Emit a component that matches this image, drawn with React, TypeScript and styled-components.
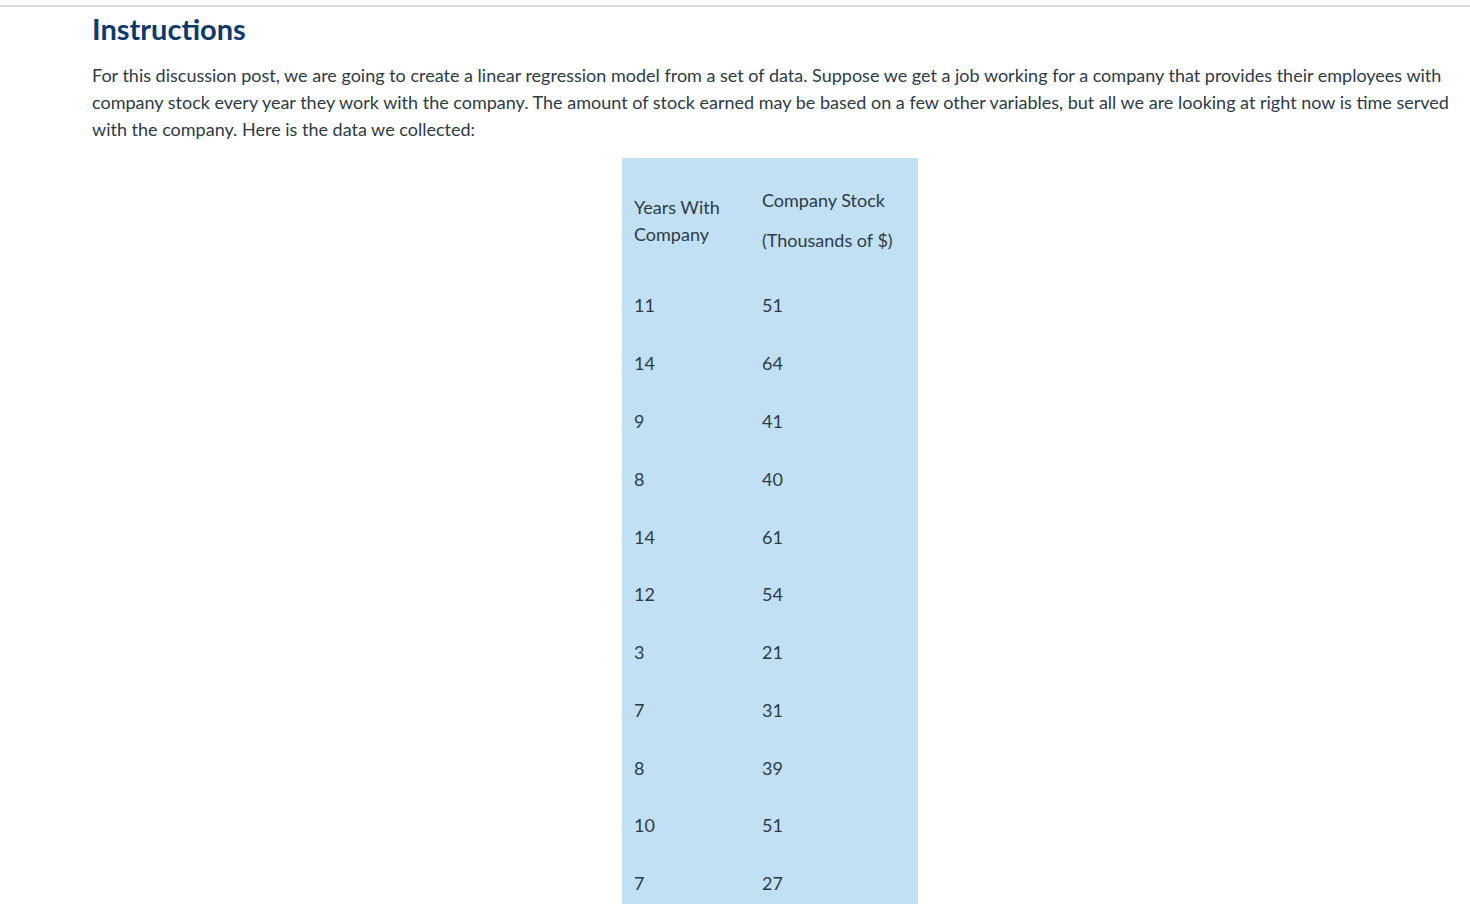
import React from "react";
import styled, { createGlobalStyle } from "styled-components";

const Global = createGlobalStyle`
  html, body { margin: 0; padding: 0; background: #ffffff; }
  body { font-family: Lato, "Open Sans", sans-serif; color: #2d3b45; }
`;

const Page = styled.div`
  border-top: 2px solid #dcdcdc;
  margin-top: 5px;
  padding: 4px 18px 0 92px;
`;

const Heading = styled.h2`
  margin: 0;
  font-family: Lato, sans-serif;
  font-weight: 700;
  font-size: 29px;
  line-height: 36px;
  color: #0b3a6b;
`;

const Para = styled.p`
  margin: 15px 0 0;
  font-size: 18px;
  line-height: 27px;
  max-width: 1360px;
`;

const DataTable = styled.table`
  margin: 15px 0 0 530px;
  border-collapse: collapse;
  background: #c2e0f4;
  width: 296px;
  font-size: 18px;
  line-height: 27px;
  color: #2d3b45;
`;

const Cell = styled.td<{ $wide?: boolean; $head?: boolean }>`
  padding: ${(p) => (p.$head ? "29px 12px 23px" : "15.4px 12px")};
  width: ${(p) => (p.$wide ? "144px" : "104px")};
  vertical-align: middle;
  text-align: left;
`;

const Stack = styled.div`
  display: flex;
  flex-direction: column;
  gap: 13px;
`;

const rows: [number, number][] = [
  [11, 51],
  [14, 64],
  [9, 41],
  [8, 40],
  [14, 61],
  [12, 54],
  [3, 21],
  [7, 31],
  [8, 39],
  [10, 51],
  [7, 27],
];

export default function App() {
  return (
    <>
      <Global />
      <Page>
        <Heading>Instructions</Heading>
        <Para>
          For this discussion post, we are going to create a linear regression model from a set of data. Suppose we get a
          job working for a company that provides their employees with company stock every year they work with the
          company. The amount of stock earned may be based on a few other variables, but all we are looking at right now
          is time served with the company. Here is the data we collected:
        </Para>
        <DataTable>
          <tbody>
            <tr>
              <Cell $head>
                Years With
                <br />
                Company
              </Cell>
              <Cell $head $wide>
                <Stack>
                  <span>Company Stock</span>
                  <span>(Thousands of $)</span>
                </Stack>
              </Cell>
            </tr>
            {rows.map(([y, s], i) => (
              <tr key={i}>
                <Cell>{y}</Cell>
                <Cell $wide>{s}</Cell>
              </tr>
            ))}
          </tbody>
        </DataTable>
      </Page>
    </>
  );
}
